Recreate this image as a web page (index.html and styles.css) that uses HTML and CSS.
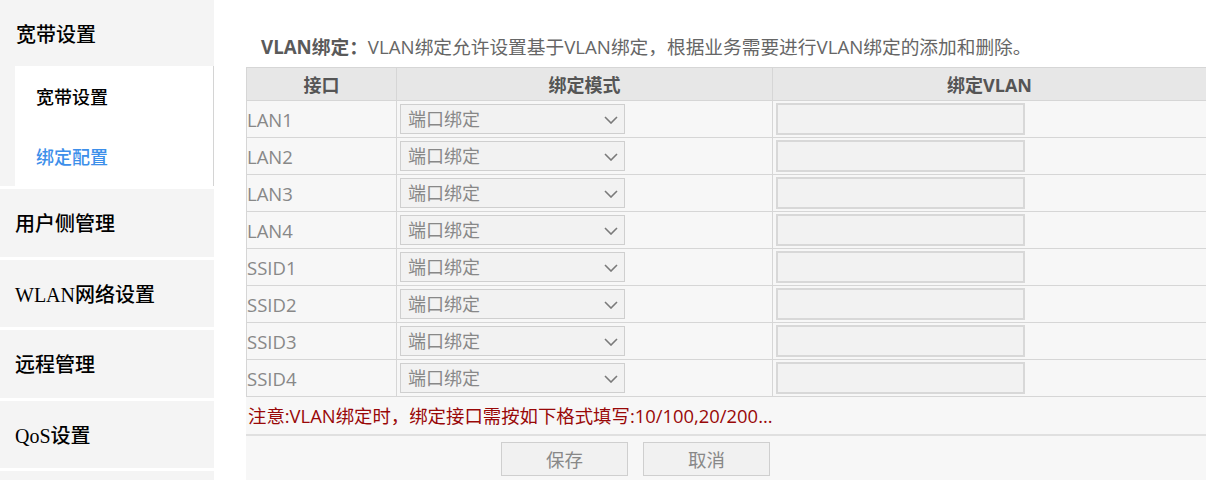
FILE: index.html
```html
<!DOCTYPE html>
<html lang="zh-CN">
<head>
<meta charset="utf-8">
<title>绑定配置</title>
<link rel="stylesheet" href="styles.css">
</head>
<body>
<div class="page">
  <aside class="sidebar">
    <div class="group">
      <div class="menu-head">宽带设置</div>
      <div class="submenu">
        <div class="sub-item">宽带设置</div>
        <div class="sub-item active">绑定配置</div>
      </div>
    </div>
    <div class="menu-item">用户侧管理</div>
    <div class="menu-item">WLAN网络设置</div>
    <div class="menu-item">远程管理</div>
    <div class="menu-item">QoS设置</div>
    <div class="menu-item last"></div>
  </aside>
  <main class="main">
    <div class="desc"><b>VLAN绑定：</b>VLAN绑定允许设置基于VLAN绑定，根据业务需要进行VLAN绑定的添加和删除。</div>
    <table class="grid">
      <colgroup><col class="c1"><col class="c2"><col class="c3"></colgroup>
      <thead>
        <tr><th>接口</th><th>绑定模式</th><th>绑定VLAN</th></tr>
      </thead>
      <tbody>
        <tr><td class="port">LAN1</td><td><span class="sel"><select class="mode"><option>端口绑定</option></select><svg class="chev" width="14" height="8" viewBox="0 0 14 8"><path d="M1 1 L7 7 L13 1" fill="none" stroke="#7a7a7a" stroke-width="1.6"/></svg></span></td><td><input class="vlan" type="text"></td></tr>
        <tr><td class="port">LAN2</td><td><span class="sel"><select class="mode"><option>端口绑定</option></select><svg class="chev" width="14" height="8" viewBox="0 0 14 8"><path d="M1 1 L7 7 L13 1" fill="none" stroke="#7a7a7a" stroke-width="1.6"/></svg></span></td><td><input class="vlan" type="text"></td></tr>
        <tr><td class="port">LAN3</td><td><span class="sel"><select class="mode"><option>端口绑定</option></select><svg class="chev" width="14" height="8" viewBox="0 0 14 8"><path d="M1 1 L7 7 L13 1" fill="none" stroke="#7a7a7a" stroke-width="1.6"/></svg></span></td><td><input class="vlan" type="text"></td></tr>
        <tr><td class="port">LAN4</td><td><span class="sel"><select class="mode"><option>端口绑定</option></select><svg class="chev" width="14" height="8" viewBox="0 0 14 8"><path d="M1 1 L7 7 L13 1" fill="none" stroke="#7a7a7a" stroke-width="1.6"/></svg></span></td><td><input class="vlan" type="text"></td></tr>
        <tr><td class="port">SSID1</td><td><span class="sel"><select class="mode"><option>端口绑定</option></select><svg class="chev" width="14" height="8" viewBox="0 0 14 8"><path d="M1 1 L7 7 L13 1" fill="none" stroke="#7a7a7a" stroke-width="1.6"/></svg></span></td><td><input class="vlan" type="text"></td></tr>
        <tr><td class="port">SSID2</td><td><span class="sel"><select class="mode"><option>端口绑定</option></select><svg class="chev" width="14" height="8" viewBox="0 0 14 8"><path d="M1 1 L7 7 L13 1" fill="none" stroke="#7a7a7a" stroke-width="1.6"/></svg></span></td><td><input class="vlan" type="text"></td></tr>
        <tr><td class="port">SSID3</td><td><span class="sel"><select class="mode"><option>端口绑定</option></select><svg class="chev" width="14" height="8" viewBox="0 0 14 8"><path d="M1 1 L7 7 L13 1" fill="none" stroke="#7a7a7a" stroke-width="1.6"/></svg></span></td><td><input class="vlan" type="text"></td></tr>
        <tr><td class="port">SSID4</td><td><span class="sel"><select class="mode"><option>端口绑定</option></select><svg class="chev" width="14" height="8" viewBox="0 0 14 8"><path d="M1 1 L7 7 L13 1" fill="none" stroke="#7a7a7a" stroke-width="1.6"/></svg></span></td><td><input class="vlan" type="text"></td></tr>
      </tbody>
    </table>
    <div class="note">注意:VLAN绑定时，绑定接口需按如下格式填写:10/100,20/200...</div>
    <div class="actions">
      <button class="btn" type="button">保存</button>
      <button class="btn" type="button">取消</button>
    </div>
  </main>
</div>
</body>
</html>
```
FILE: styles.css
```css
html, body {
  margin: 0;
  padding: 0;
  background: #fff;
}
body {
  width: 1206px;
  height: 480px;
  overflow: hidden;
  font-family: "Open Sans", "Noto Sans CJK SC", sans-serif;
}
.page {
  display: flex;
  height: 480px;
  overflow: hidden;
}

/* Sidebar */
.sidebar {
  width: 214px;
  flex: none;
  background: #fff;
  font-family: "Liberation Serif", "Noto Sans CJK SC", serif;
  color: #000;
  overflow: hidden;
}
.group {
  background: #f4f4f4;
  margin-bottom: 3px;
}
.menu-head {
  height: 66px;
  display: flex;
  align-items: center;
  padding-left: 16px;
  font-size: 20px;
  font-weight: 500;
}
.submenu {
  margin-left: 15px;
  background: #fff;
  border-right: 1px solid #d4d4d4;
}
.sub-item {
  height: 60px;
  display: flex;
  align-items: center;
  padding-left: 21px;
  font-size: 18px;
  font-weight: 500;
}
.sub-item.active {
  color: #3d8fea;
}
.menu-item {
  height: 67.5px;
  margin-bottom: 3px;
  background: #f4f4f4;
  display: flex;
  align-items: center;
  padding-left: 15px;
  font-size: 20px;
  font-weight: 500;
}
.menu-item.last {
  height: 9px;
  margin-bottom: 0;
}

/* Main */
.main {
  flex: 1;
  padding-left: 32px;
  background: #fff;
  color: #666;
  overflow: hidden;
}
.desc {
  height: 67px;
  box-sizing: border-box;
  padding: 35px 0 0 15px;
  font-size: 18.7px;
  line-height: 24px;
  color: #666;
  white-space: nowrap;
}
.desc b {
  color: #5a5a5a;
}
.grid {
  width: 960px;
  border-collapse: collapse;
  background: #f7f7f7;
  table-layout: fixed;
}
.grid col.c1 { width: 150px; }
.grid col.c2 { width: 376px; }
.grid col.c3 { width: 434px; }
.grid th {
  height: 32px;
  padding: 0;
  background: #e7e7e7;
  border: 1px solid #d6d6d6;
  font-size: 18px;
  font-weight: bold;
  color: #555;
  text-align: center;
}
.grid td {
  height: 36px;
  padding: 0 0 0 3px;
  border: 1px solid #d6d6d6;
  font-size: 18.5px;
  color: #888;
  vertical-align: middle;
}
.grid td.port {
  padding-left: 0;
}
.sel {
  position: relative;
  display: inline-block;
  vertical-align: middle;
}
.mode {
  -webkit-appearance: none;
  appearance: none;
  width: 225px;
  height: 30px;
  box-sizing: border-box;
  margin: 0;
  padding: 0 0 0 7px;
  border: 1px solid #cfcfcf;
  border-radius: 0;
  background: #f2f2f2;
  color: #888;
  font-family: "Open Sans", "Noto Sans CJK SC", sans-serif;
  font-size: 18px;
  display: block;
}
.chev {
  position: absolute;
  right: 7px;
  top: 12px;
  pointer-events: none;
}
.vlan {
  display: block;
  width: 249px;
  height: 32px;
  box-sizing: border-box;
  margin: 0;
  border: 2px solid #d8d8d8;
  background: #f2f2f2;
  outline: none;
}
.note {
  width: 960px;
  height: 39px;
  box-sizing: border-box;
  padding-left: 2px;
  background: #f7f7f7;
  border-bottom: 2px solid #e0e0e0;
  color: #990808;
  font-size: 18.4px;
  line-height: 37px;
  white-space: nowrap;
}
.actions {
  width: 960px;
  height: 45px;
  box-sizing: border-box;
  padding: 6px 0 0 255px;
  background: #f7f7f7;
  display: flex;
  gap: 15px;
  align-items: flex-start;
}
.btn {
  width: 127px;
  height: 34px;
  margin: 0;
  padding: 0;
  border: 1px solid #cfcfcf;
  background: #f1f1f1;
  color: #888;
  font-family: "Open Sans", "Noto Sans CJK SC", sans-serif;
  font-size: 18.5px;
}
```
